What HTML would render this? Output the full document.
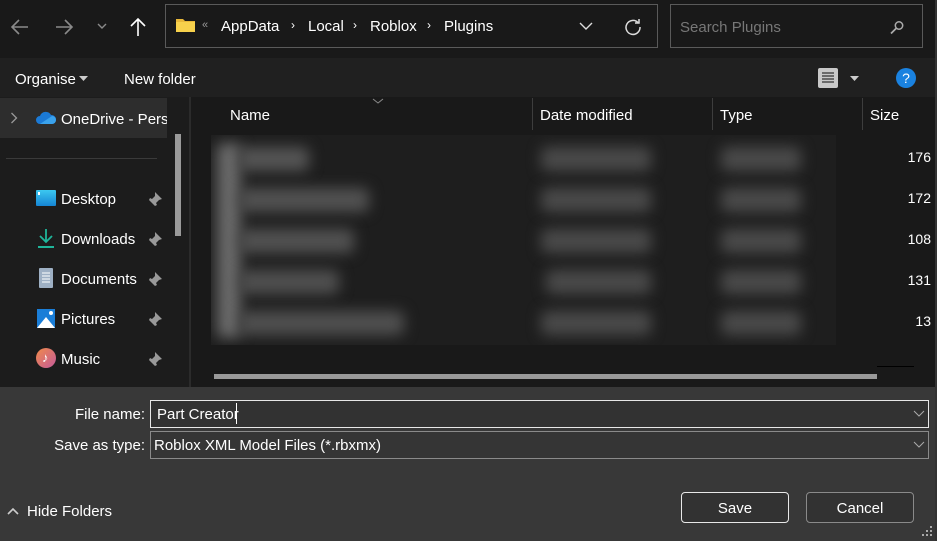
<!DOCTYPE html>
<html><head><style>
*{margin:0;padding:0;box-sizing:border-box}
body{width:937px;height:541px;overflow:hidden;background:#191919;font-family:"Segoe UI","Liberation Sans",sans-serif;font-size:15px;color:#fff;position:relative}
.a{position:absolute}
.t{position:absolute;white-space:nowrap;margin-top:2px}
.blur{position:absolute;background:#555;filter:blur(7px);border-radius:6px}
</style></head><body>
<div class="a" style="left:0;top:0;width:937px;height:58px;background:#191919"></div>
<svg class="a" style="left:8px;top:14px" width="150" height="26" viewBox="0 0 150 26">
<path d="M20 13H4M11 6l-7 7 7 7" stroke="#8a8a8a" stroke-width="1.6" fill="none"/>
<path d="M48 13h16M57 6l7 7-7 7" stroke="#8a8a8a" stroke-width="1.6" fill="none"/>
<path d="M90 10l4 4 4-4" stroke="#8a8a8a" stroke-width="1.4" fill="none"/>
<path d="M130 22V5M123 12l7-7 7 7" stroke="#fff" stroke-width="1.6" fill="none"/>
</svg>
<div class="a" style="left:165px;top:4px;width:493px;height:44px;border:1px solid #5a5a5a"></div>
<svg class="a" style="left:176px;top:17px" width="20" height="16"><path d="M0 2h7l2 2h10v11H0z" fill="#e8b83a"/><path d="M0 5h19v10H0z" fill="#f7d14c"/></svg>
<div class="t" style="left:202px;top:17px;color:#999;font-size:11px">«</div>
<div class="t" style="left:221px;top:16px">AppData</div>
<div class="t" style="left:291px;top:16px;font-size:12px">›</div>
<div class="t" style="left:308px;top:16px">Local</div>
<div class="t" style="left:353px;top:16px;font-size:12px">›</div>
<div class="t" style="left:370px;top:16px">Roblox</div>
<div class="t" style="left:427px;top:16px;font-size:12px">›</div>
<div class="t" style="left:444px;top:16px">Plugins</div>
<svg class="a" style="left:578px;top:21px" width="16" height="10"><path d="M2 2l6 6 6-6" stroke="#ddd" stroke-width="1.4" fill="none"/></svg>
<svg class="a" style="left:623px;top:17px" width="20" height="20"><path d="M15 5.5A7 7 0 1 0 17 10" stroke="#ddd" stroke-width="1.5" fill="none"/><path d="M16 2v4h-4" stroke="#ddd" stroke-width="1.5" fill="none"/></svg>
<div class="a" style="left:670px;top:4px;width:253px;height:44px;border:1px solid #5a5a5a"></div>
<div class="t" style="left:680px;top:17px;color:#777">Search Plugins</div>
<svg class="a" style="left:889px;top:20px" width="16" height="16"><circle cx="10" cy="5.5" r="3.7" stroke="#aaa" stroke-width="1.5" fill="none"/><path d="M7.5 8L2 13.5" stroke="#aaa" stroke-width="1.8"/></svg>
<div class="a" style="left:0;top:58px;width:935px;height:39px;background:#202020"></div>
<div class="t" style="left:15px;top:69px">Organise</div>
<svg class="a" style="left:79px;top:76px" width="10" height="6"><path d="M0 0h9L4.5 5z" fill="#ccc"/></svg>
<div class="t" style="left:124px;top:69px">New folder</div>
<div class="a" style="left:818px;top:68px;width:20px;height:20px;background:#c8c8c8;border-radius:2px"></div>
<svg class="a" style="left:818px;top:68px" width="20" height="20"><path d="M4 5h12M4 8h12M4 11h12M4 14h12" stroke="#333" stroke-width="1.2"/></svg>
<svg class="a" style="left:850px;top:76px" width="10" height="6"><path d="M0 0h9L4.5 5z" fill="#ccc"/></svg>
<div class="a" style="left:896px;top:68px;width:20px;height:20px;border-radius:50%;background:#1a82e0;text-align:center;font-size:14px;line-height:20px;color:#fff">?</div>
<div class="a" style="left:0;top:97px;width:190px;height:290px;background:#1c1c1c"></div>
<div class="a" style="left:0;top:98px;width:167px;height:40px;background:#2d2d2d"></div>
<svg class="a" style="left:10px;top:112px" width="8" height="12"><path d="M1.5 1l5 5-5 5" stroke="#999" stroke-width="1.3" fill="none"/></svg>
<svg class="a" style="left:35px;top:111px" width="22" height="14"><path d="M5 13a4 4 0 0 1 0-8 6 6 0 0 1 11-1 4.5 4.5 0 0 1 1 9z" fill="#1b7ad6"/><path d="M5 13h12a4 4 0 0 0 0-8" fill="#3aa2ec"/></svg>
<div class="t" style="left:61px;top:109px;width:106px;overflow:hidden">OneDrive - Personal</div>
<div class="a" style="left:6px;top:158px;width:151px;height:1px;background:#3a3a3a"></div>
<div class="a" style="left:175px;top:134px;width:6px;height:102px;background:#9a9a9a"></div>
<div class="a" style="left:189px;top:97px;width:2px;height:290px;background:#2b2b2b"></div>
<div class="a" style="left:36px;top:190px;width:20px;height:16px;background:linear-gradient(#3cc8f0,#1585d4);border-radius:1px"></div>
<div class="a" style="left:38px;top:192px;width:2px;height:3px;background:#fff"></div>
<svg class="a" style="left:37px;top:228px" width="18" height="20"><path d="M9 1v13M3 8l6 6 6-6" stroke="#1fb59a" stroke-width="1.8" fill="none"/><path d="M1 19h16" stroke="#1fb59a" stroke-width="2"/></svg>
<div class="a" style="left:39px;top:268px;width:14px;height:20px;background:#9eb0c4;border-radius:1px"></div>
<svg class="a" style="left:39px;top:268px" width="14" height="20"><path d="M3 5h8M3 8h8M3 11h8M3 14h8" stroke="#fff" stroke-width="1"/></svg>
<div class="a" style="left:37px;top:309px;width:18px;height:19px;background:#1a7ed8"></div>
<svg class="a" style="left:37px;top:309px" width="18" height="19"><path d="M0 19L9 8l9 11z" fill="#fff"/><circle cx="14" cy="4" r="2" fill="#fff"/></svg>
<div class="a" style="left:36px;top:348px;width:20px;height:20px;border-radius:50%;background:linear-gradient(135deg,#f08a4a,#c45a9a)"></div>
<div class="t" style="left:42px;top:348px;font-size:13px">♪</div>
<div class="t" style="left:61px;top:189px">Desktop</div>
<div class="t" style="left:61px;top:229px">Downloads</div>
<div class="t" style="left:61px;top:269px">Documents</div>
<div class="t" style="left:61px;top:309px">Pictures</div>
<div class="t" style="left:61px;top:349px">Music</div>
<svg class="a" style="left:149px;top:191px" width="14" height="180" viewBox="0 0 14 180">
<g fill="#999"><path d="M6 1l7 7-3 1-3 3 1 2-2 1-6-6 1-2 2 1 3-3z"/></g>
<g fill="#999" transform="translate(0,40)"><path d="M6 1l7 7-3 1-3 3 1 2-2 1-6-6 1-2 2 1 3-3z"/></g>
<g fill="#999" transform="translate(0,80)"><path d="M6 1l7 7-3 1-3 3 1 2-2 1-6-6 1-2 2 1 3-3z"/></g>
<g fill="#999" transform="translate(0,120)"><path d="M6 1l7 7-3 1-3 3 1 2-2 1-6-6 1-2 2 1 3-3z"/></g>
<g fill="#999" transform="translate(0,160)"><path d="M6 1l7 7-3 1-3 3 1 2-2 1-6-6 1-2 2 1 3-3z"/></g>
</svg>
<svg class="a" style="left:372px;top:98px" width="12" height="6"><path d="M1 1l5 4 5-4" stroke="#888" stroke-width="1" fill="none"/></svg>
<div class="t" style="left:230px;top:105px">Name</div>
<div class="a" style="left:532px;top:98px;width:1px;height:32px;background:#3d3d3d"></div>
<div class="t" style="left:540px;top:105px">Date modified</div>
<div class="a" style="left:712px;top:98px;width:1px;height:32px;background:#3d3d3d"></div>
<div class="t" style="left:720px;top:105px">Type</div>
<div class="a" style="left:862px;top:98px;width:1px;height:32px;background:#3d3d3d"></div>
<div class="t" style="left:870px;top:105px">Size</div>
<div class="a" style="left:211px;top:135px;width:625px;height:210px;background:#1e1e1e;overflow:hidden">
<div class="blur" style="left:6px;top:8px;width:24px;height:195px;background:#6a6a6a"></div>
<div class="blur" style="left:28px;top:12px;width:70px;height:24px;background:#555"></div>
<div class="blur" style="left:28px;top:53px;width:130px;height:24px;background:#525252"></div>
<div class="blur" style="left:28px;top:94px;width:115px;height:24px;background:#525252"></div>
<div class="blur" style="left:28px;top:135px;width:100px;height:24px;background:#505050"></div>
<div class="blur" style="left:28px;top:176px;width:165px;height:24px;background:#505050"></div>
<div class="blur" style="left:330px;top:12px;width:110px;height:24px;background:#4a4a4a"></div>
<div class="blur" style="left:330px;top:53px;width:110px;height:24px;background:#4a4a4a"></div>
<div class="blur" style="left:330px;top:94px;width:110px;height:24px;background:#4a4a4a"></div>
<div class="blur" style="left:335px;top:135px;width:105px;height:24px;background:#4a4a4a"></div>
<div class="blur" style="left:330px;top:176px;width:110px;height:24px;background:#4a4a4a"></div>
<div class="blur" style="left:510px;top:12px;width:80px;height:24px;background:#4a4a4a"></div>
<div class="blur" style="left:510px;top:53px;width:80px;height:24px;background:#4a4a4a"></div>
<div class="blur" style="left:510px;top:94px;width:80px;height:24px;background:#4a4a4a"></div>
<div class="blur" style="left:510px;top:135px;width:80px;height:24px;background:#4a4a4a"></div>
<div class="blur" style="left:510px;top:176px;width:80px;height:24px;background:#4a4a4a"></div>
</div>
<div class="t" style="right:6px;top:147px;font-size:14px">176</div>
<div class="t" style="right:6px;top:188px;font-size:14px">172</div>
<div class="t" style="right:6px;top:229px;font-size:14px">108</div>
<div class="t" style="right:6px;top:270px;font-size:14px">131</div>
<div class="t" style="right:6px;top:311px;font-size:14px">13</div>
<div class="a" style="left:214px;top:374px;width:663px;height:5px;background:#999"></div>
<div class="a" style="left:877px;top:366px;width:37px;height:1px;background:#000"></div>
<div class="a" style="left:935px;top:0;width:2px;height:541px;background:#333"></div>
<div class="a" style="left:0;top:387px;width:935px;height:154px;background:#383838"></div>
<div class="t" style="right:792px;top:404px">File name:</div>
<div class="a" style="left:150px;top:400px;width:779px;height:28px;border:1px solid #e8e8e8;background:#323232"></div>
<div class="t" style="left:157px;top:404px">Part Creator</div>
<div class="a" style="left:236px;top:403px;width:1px;height:21px;background:#fff"></div>
<svg class="a" style="left:913px;top:410px" width="12" height="8"><path d="M1 1l5 5 5-5" stroke="#aaa" stroke-width="1" fill="none"/></svg>
<div class="t" style="right:792px;top:435px">Save as type:</div>
<div class="a" style="left:150px;top:431px;width:779px;height:28px;border:1px solid #8a8a8a;background:#353535"></div>
<div class="t" style="left:154px;top:435px">Roblox XML Model Files (*.rbxmx)</div>
<svg class="a" style="left:913px;top:441px" width="12" height="8"><path d="M1 1l5 5 5-5" stroke="#aaa" stroke-width="1" fill="none"/></svg>
<svg class="a" style="left:7px;top:507px" width="12" height="8"><path d="M1 7l5-5 5 5" stroke="#ccc" stroke-width="1.6" fill="none"/></svg>
<div class="t" style="left:27px;top:501px">Hide Folders</div>
<div class="a" style="left:681px;top:492px;width:108px;height:31px;border:1px solid #e8e8e8;border-radius:4px;background:#323232;text-align:center;line-height:31px">Save</div>
<div class="a" style="left:806px;top:492px;width:108px;height:31px;border:1px solid #8a8a8a;border-radius:4px;background:#323232;text-align:center;line-height:31px">Cancel</div>
<svg class="a" style="left:922px;top:526px" width="12" height="12"><g fill="#aaa"><rect x="8" y="0" width="2" height="2"/><rect x="4" y="4" width="2" height="2"/><rect x="8" y="4" width="2" height="2"/><rect x="0" y="8" width="2" height="2"/><rect x="4" y="8" width="2" height="2"/><rect x="8" y="8" width="2" height="2"/></g></svg>
</body></html>
